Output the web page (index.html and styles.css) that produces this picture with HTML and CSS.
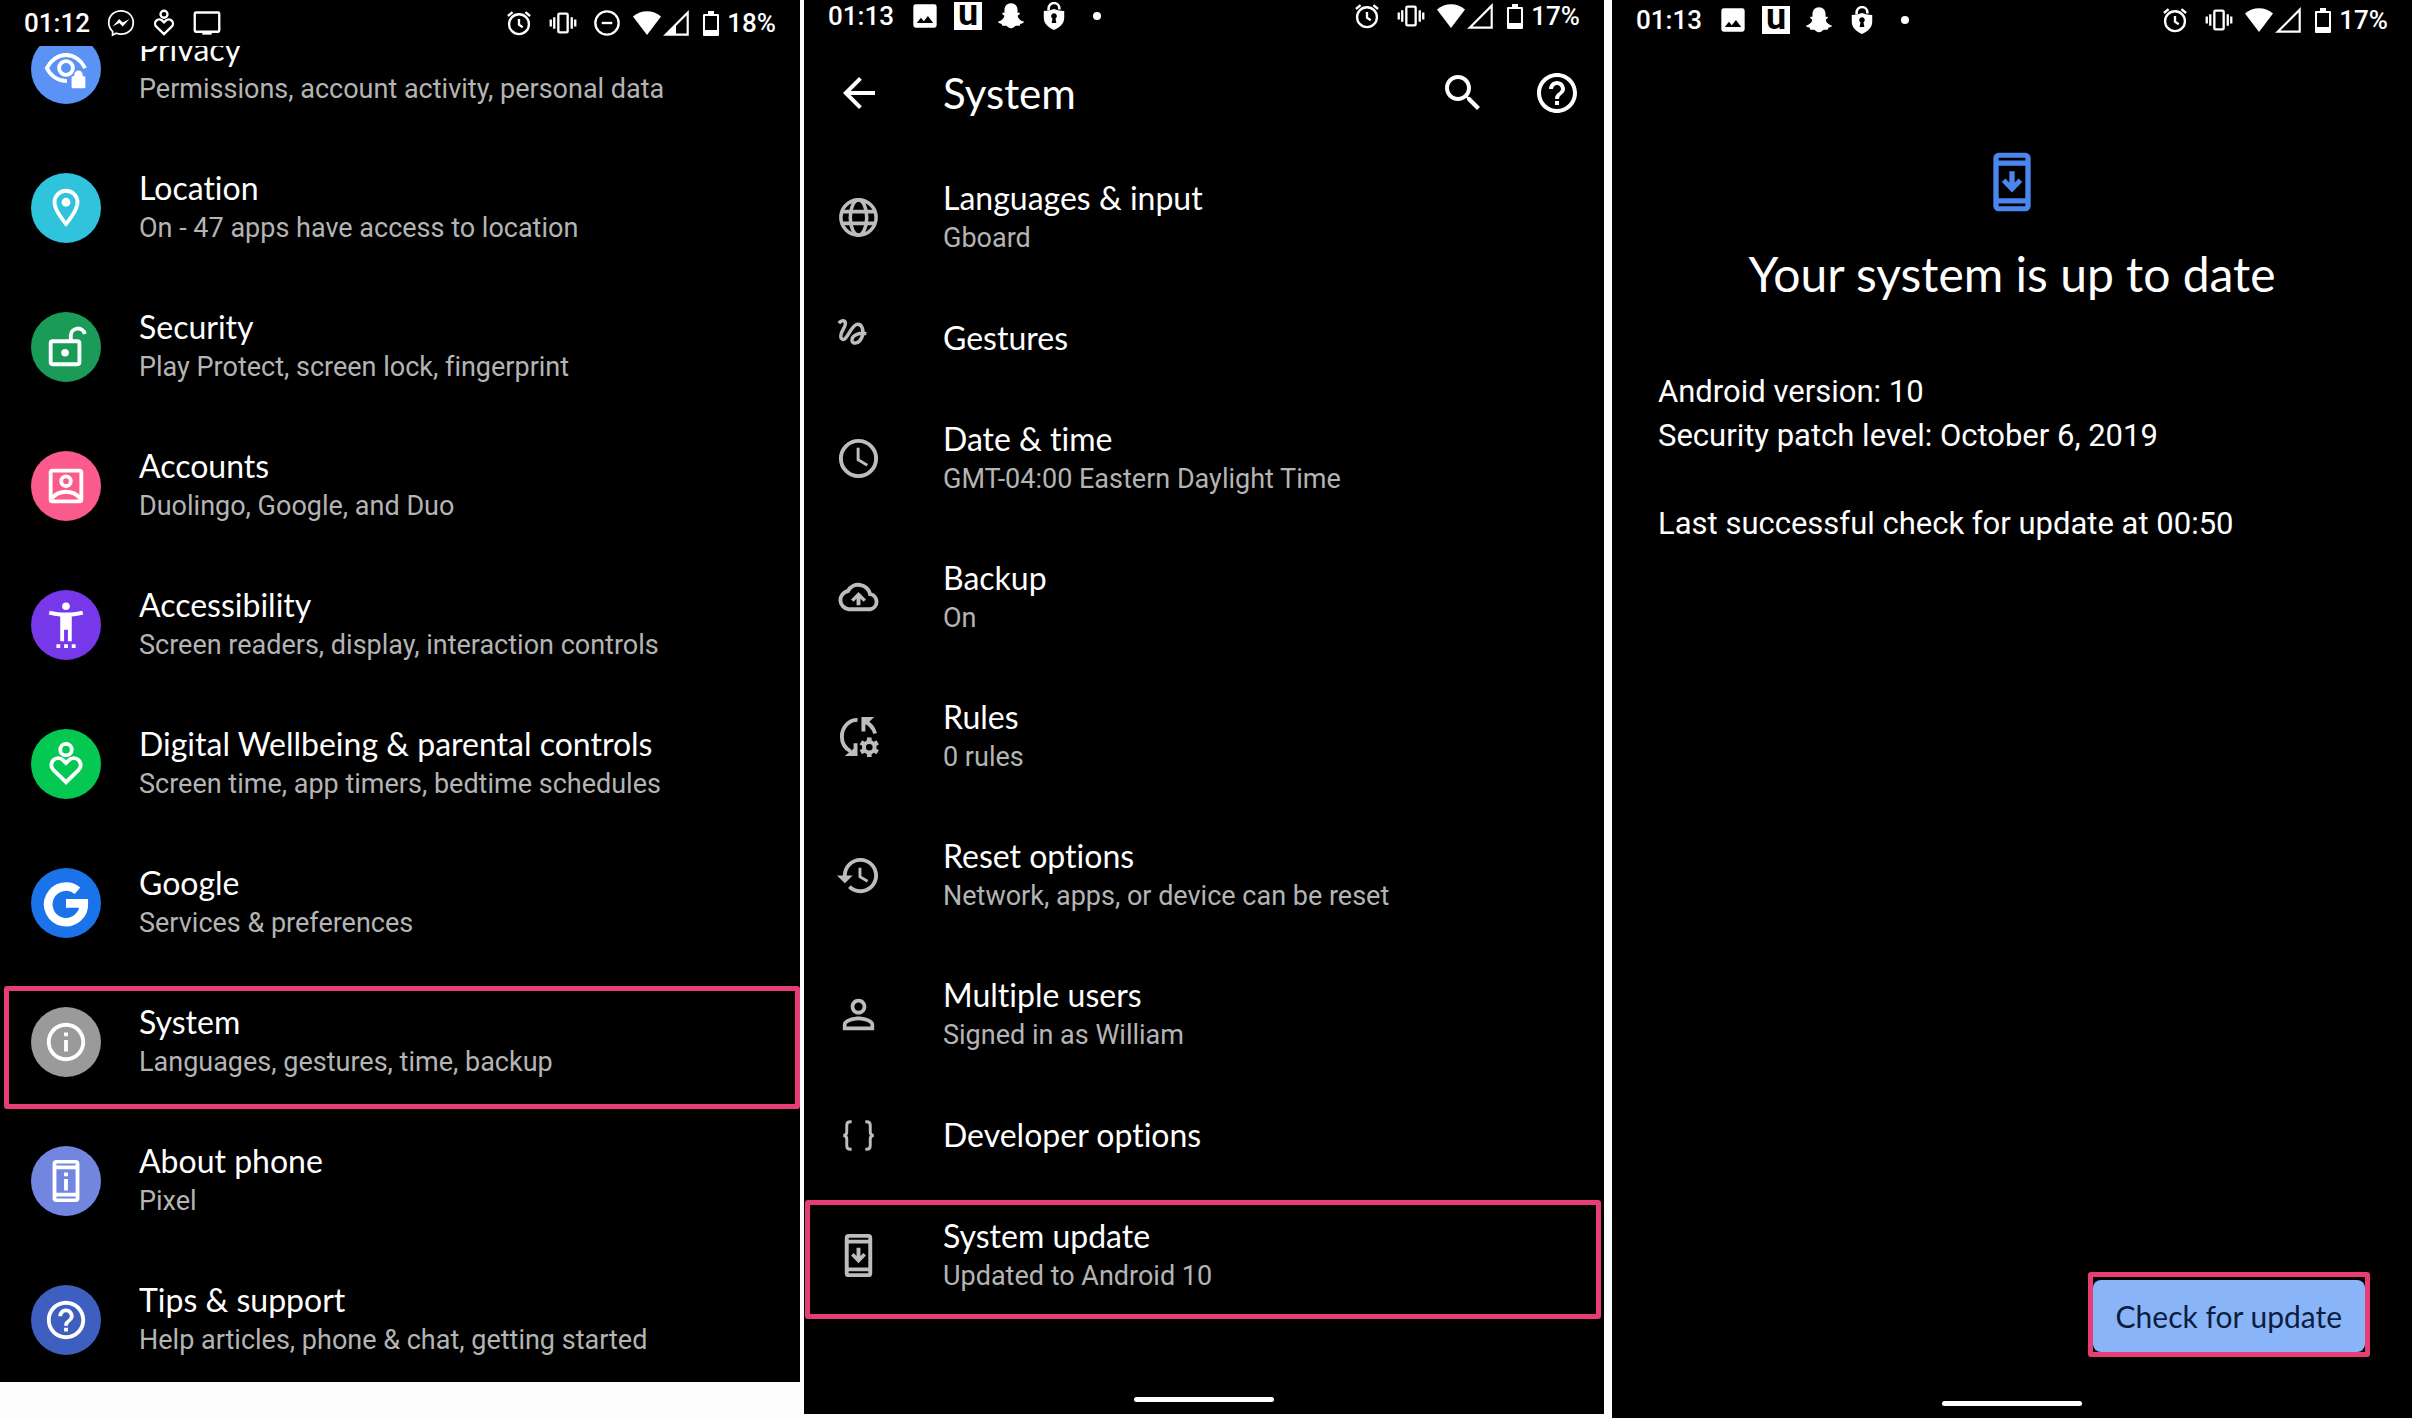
FILE: index.html
```html
<!DOCTYPE html>
<html lang="en">
<head>
    <meta charset="UTF-8">
    <meta name="viewport" content="width=device-width, initial-scale=1.0">
    <title>System update</title>
    <link rel="stylesheet" href="styles.css">
</head>
<body>
    <!-- shared icons -->
    <svg class="sprite" aria-hidden="true">
        <symbol id="alarm" viewBox="0 0 24 24">
            <circle cx="12" cy="13" r="8.5" fill="none" stroke="currentColor" stroke-width="2"/>
            <path d="M12 8.500v5l3.200 2.200M2.500 6l4-3.400M21.500 6l-4-3.400" fill="none" stroke="currentColor" stroke-width="2"/>
        </symbol>
        <symbol id="vibrate" viewBox="0 0 24 24">
            <rect x="8" y="4" width="8" height="16" rx="1" fill="none" stroke="currentColor" stroke-width="2"/>
            <path d="M4.500 7v10M1.500 9v6M19.500 7v10M22.500 9v6" stroke="currentColor" stroke-width="2"/>
        </symbol>
        <symbol id="dnd" viewBox="0 0 24 24">
            <circle cx="12" cy="12" r="10" fill="none" stroke="currentColor" stroke-width="2"/>
            <path d="M7.500 12h9" stroke="currentColor" stroke-width="2"/>
        </symbol>
        <symbol id="wifi" viewBox="0 0 28 24">
            <path d="M14 24L0 5.500C8-1.500 20-1.500 28 5.500z" fill="currentColor"/>
        </symbol>
        <symbol id="signal" viewBox="0 0 24 24">
            <path d="M2.500 22.800L22.800 2.500V22.800z" fill="none" stroke="currentColor" stroke-width="2"/>
        </symbol>
        <symbol id="signal-low" viewBox="0 0 24 24">
            <path d="M2.500 22.800L22.800 2.500V22.800z" fill="none" stroke="currentColor" stroke-width="2"/>
            <path d="M2.500 22.800L12 13.300V22.800z" fill="currentColor"/>
        </symbol>
        <symbol id="battery" viewBox="0 0 16 25">
            <path d="M5 0h6v3h4a1 1 0 0 1 1 1v20a1 1 0 0 1-1 1H1a1 1 0 0 1-1-1V4a1 1 0 0 1 1-1h4zM2 5v14h12V5z" fill="currentColor" fill-rule="evenodd"/>
        </symbol>
        <symbol id="picture" viewBox="0 0 24 24">
            <path d="M4 2h16a2 2 0 0 1 2 2v16a2 2 0 0 1-2 2H4a2 2 0 0 1-2-2V4a2 2 0 0 1 2-2zM5 18h14l-4.500-6-3.500 4.500-2.500-3z" fill="currentColor" fill-rule="evenodd"/>
        </symbol>
        <symbol id="ghost" viewBox="0 0 24 24">
            <path d="M12 1c3.600 0 5.600 2.600 5.600 5.800v2.400c.8.300 1.700-.2 2 .4.300.8-1.600 1.400-1.800 2.200-.2 1.400 2.200 4.400 5.200 5 .4 1.300-2.200 1.600-2.900 1.900-.4.500-.2 1.300-.8 1.600-.8.300-1.900-.3-3.200.1-1.300.5-2 2.100-4.100 2.100s-2.800-1.600-4.100-2.100c-1.300-.4-2.400.2-3.200-.1-.6-.3-.4-1.100-.8-1.600C3.200 18.400.600 18.100 1 16.800c3-.6 5.400-3.600 5.200-5C6 11 4.100 10.400 4.400 9.600c.3-.6 1.200-.1 2-.4V6.800C6.400 3.600 8.400 1 12 1z" fill="currentColor"/>
        </symbol>
        <symbol id="shield-lock" viewBox="0 0 24 26">
            <path d="M7 8V6a5 5 0 0 1 10 0v1" fill="none" stroke="currentColor" stroke-width="2.400"/>
            <path d="M12 6.500c3 1.200 6 1.800 9.500 1.800v6.200c0 5.500-4 9.500-9.500 11.500C6.500 24 2.500 20 2.500 14.500V8.300C6 8.300 9 7.700 12 6.500zM12 10.500a2.600 2.600 0 0 0-1.400 4.800L9.800 19.500h4.400l-.8-4.200A2.600 2.600 0 0 0 12 10.500z" fill="currentColor" fill-rule="evenodd"/>
        </symbol>
        <symbol id="wellbeing" viewBox="0 0 24 24">
            <circle cx="12" cy="4.500" r="3" fill="none" stroke="currentColor" stroke-width="2"/>
            <path d="M12 21.500l-6.600-6.400a3.600 3.600 0 0 1 5.100-5.100l1.500 1.500 1.500-1.500a3.600 3.600 0 0 1 5.100 5.100z" fill="none" stroke="currentColor" stroke-width="2"/>
        </symbol>
        <symbol id="update" viewBox="0 0 24 24">
            <path d="M7 1h10a2 2 0 0 1 2 2v18a2 2 0 0 1-2 2H7a2 2 0 0 1-2-2V3a2 2 0 0 1 2-2zM7 2.900v1h10v-1zM7 5.900v12.200h10V5.900zM7 20.100v1h10v-1z" fill="currentColor" fill-rule="evenodd"/>
            <path d="M11 8h2v4.200l1.500-1.500 1.300 1.300L12 15.900 8.200 12l1.300-1.300 1.500 1.500z" fill="currentColor"/>
        </symbol>
        <symbol id="help" viewBox="0 0 24 24">
            <path d="M11 18h2v-2h-2v2zm1-16C6.480 2 2 6.480 2 12s4.480 10 10 10 10-4.480 10-10S17.520 2 12 2zm0 18c-4.410 0-8-3.590-8-8s3.590-8 8-8 8 3.590 8 8-3.590 8-8 8zm0-14c-2.210 0-4 1.790-4 4h2c0-1.100.9-2 2-2s2 .9 2 2c0 2-3 1.750-3 5h2c0-2.250 3-2.500 3-5 0-2.210-1.790-4-4-4z" fill="currentColor"/>
        </symbol>
    </svg>

    <main class="screens">
        <!-- Settings -->
        <section class="phone phone-settings">
            <header class="status">
                <time>01:12</time>
                <div class="notices">
                    <svg viewBox="0 0 24 24">
                        <path d="M12 1.500c-6 0-10.500 4.400-10.500 10.200 0 3 1.300 5.600 3.300 7.400v3.200l3-1.500c1.300.4 2.700.7 4.200.7 6 0 10.500-4.200 10.500-9.800S18 1.500 12 1.500z" fill="none" stroke="currentColor" stroke-width="1.500"/>
                        <path d="M4.800 15l5.700-6.500 3 3 5.700-3-5.700 6.500-3-3z" fill="currentColor"/>
                    </svg>
                    <svg><use href="#wellbeing"/></svg>
                    <svg viewBox="0 0 24 24">
                        <path d="M2.500 3h19a1 1 0 0 1 1 1v14.500a1 1 0 0 1-1 1h-19a1 1 0 0 1-1-1V4a1 1 0 0 1 1-1z" fill="none" stroke="currentColor" stroke-width="2"/>
                        <path d="M8 19h8v3H8z" fill="currentColor"/>
                    </svg>
                </div>
                <div class="signals">
                    <svg><use href="#alarm"/></svg>
                    <svg><use href="#vibrate"/></svg>
                    <svg><use href="#dnd"/></svg>
                </div>
                <div class="network">
                    <svg class="wifi"><use href="#wifi"/></svg>
                    <svg class="bars"><use href="#signal-low"/></svg>
                </div>
                <svg class="battery"><use href="#battery"/></svg>
                <span>18%</span>
            </header>
            <nav class="scroll">
                <ul class="list">
                    <li><a class="row" href="#">
                        <span class="badge privacy"><svg viewBox="0 0 24 24">
                            <path d="M12.500 18.300C7.800 18.300 4 15.500 2 11.500 4 7.500 7.800 4.700 12 4.700s8 2.800 10 6.800" fill="none" stroke="currentColor" stroke-width="2"/>
                            <circle cx="12" cy="11.500" r="3.600" fill="none" stroke="currentColor" stroke-width="2"/>
                            <path d="M15.500 15.800h.8V15a2.200 2.200 0 0 1 4.400 0v.8h.8a.6.600 0 0 1 .6.600v5a.6.600 0 0 1-.6.600h-6a.6.600 0 0 1-.6-.6v-5a.6.600 0 0 1 .6-.6z" fill="currentColor"/>
                        </svg></span>
                        <span class="text"><b>Privacy</b><small>Permissions, account activity, personal data</small></span>
                    </a></li>
                    <li><a class="row" href="#">
                        <span class="badge location"><svg viewBox="0 0 24 24">
                            <path d="M12 3a6 6 0 0 0-6 6c0 4.500 6 11.300 6 11.300S18 13.500 18 9a6 6 0 0 0-6-6z" fill="none" stroke="currentColor" stroke-width="2"/>
                            <circle cx="12" cy="9" r="2.300" fill="currentColor"/>
                        </svg></span>
                        <span class="text"><b>Location</b><small>On - 47 apps have access to location</small></span>
                    </a></li>
                    <li><a class="row" href="#">
                        <span class="badge security"><svg viewBox="0 0 24 24">
                            <rect x="4" y="9" width="15" height="12" rx="1" fill="none" stroke="currentColor" stroke-width="2"/>
                            <circle cx="11.500" cy="15" r="2" fill="currentColor"/>
                            <path d="M14.500 9V6a3.700 3.700 0 0 1 7.300-.8" fill="none" stroke="currentColor" stroke-width="2"/>
                        </svg></span>
                        <span class="text"><b>Security</b><small>Play Protect, screen lock, fingerprint</small></span>
                    </a></li>
                    <li><a class="row" href="#">
                        <span class="badge accounts"><svg viewBox="0 0 24 24">
                            <rect x="4" y="4" width="16" height="16" rx="1" fill="none" stroke="currentColor" stroke-width="2"/>
                            <circle cx="12" cy="9.500" r="2.500" fill="none" stroke="currentColor" stroke-width="2"/>
                            <path d="M4.500 18.500c2-2.400 4.500-3.500 7.500-3.500s5.500 1.100 7.500 3.500" fill="none" stroke="currentColor" stroke-width="2"/>
                        </svg></span>
                        <span class="text"><b>Accounts</b><small>Duolingo, Google, and Duo</small></span>
                    </a></li>
                    <li><a class="row" href="#">
                        <span class="badge accessibility"><svg viewBox="0 0 24 24">
                            <path d="M20.500 4.500c-2.600.7-5.700 1-8.500 1s-5.900-.3-8.500-1L3 6.500c1.900.5 4 .8 6 1v13h2v-6h2v6h2v-13c2-.2 4.100-.5 6-1z" fill="currentColor"/>
                            <circle cx="12" cy="2.200" r="2" fill="currentColor"/>
                            <path d="M7 22h2v2H7zM11 22h2v2h-2zM15 22h2v2h-2z" fill="currentColor"/>
                        </svg></span>
                        <span class="text"><b>Accessibility</b><small>Screen readers, display, interaction controls</small></span>
                    </a></li>
                    <li><a class="row" href="#">
                        <span class="badge wellbeing"><svg><use href="#wellbeing"/></svg></span>
                        <span class="text"><b>Digital Wellbeing &amp; parental controls</b><small>Screen time, app timers, bedtime schedules</small></span>
                    </a></li>
                    <li><a class="row" href="#">
                        <span class="badge google"><svg viewBox="0 0 24 24">
                            <path d="M18 5.600A9.300 9.300 0 1 0 21.300 12.200H12" fill="none" stroke="currentColor" stroke-width="4.500"/>
                        </svg></span>
                        <span class="text"><b>Google</b><small>Services &amp; preferences</small></span>
                    </a></li>
                    <li class="marked"><a class="row" href="#">
                        <span class="badge system"><svg viewBox="0 0 24 24">
                            <path d="M11 7h2v2h-2zm0 4h2v6h-2zm1-9C6.480 2 2 6.480 2 12s4.480 10 10 10 10-4.480 10-10S17.520 2 12 2zm0 18c-4.410 0-8-3.590-8-8s3.590-8 8-8 8 3.590 8 8-3.590 8-8 8z" fill="currentColor"/>
                        </svg></span>
                        <span class="text"><b>System</b><small>Languages, gestures, time, backup</small></span>
                    </a></li>
                    <li><a class="row" href="#">
                        <span class="badge about"><svg viewBox="0 0 24 24">
                            <path d="M7 1h10a2 2 0 0 1 2 2v18a2 2 0 0 1-2 2H7a2 2 0 0 1-2-2V3a2 2 0 0 1 2-2zM7 2.900v1h10v-1zM7 5.900v12.200h10V5.900zM7 20.100v1h10v-1z" fill="currentColor" fill-rule="evenodd"/>
                            <path d="M11 7.500h2v2h-2zM11 11h2v6h-2z" fill="currentColor"/>
                        </svg></span>
                        <span class="text"><b>About phone</b><small>Pixel</small></span>
                    </a></li>
                    <li><a class="row" href="#">
                        <span class="badge tips"><svg><use href="#help"/></svg></span>
                        <span class="text"><b>Tips &amp; support</b><small>Help articles, phone &amp; chat, getting started</small></span>
                    </a></li>
                </ul>
            </nav>
        </section>

        <!-- System -->
        <section class="phone phone-system">
            <header class="status">
                <time>01:13</time>
                <div class="notices">
                    <svg><use href="#picture"/></svg>
                    <span class="u-logo">u</span>
                    <svg><use href="#ghost"/></svg>
                    <svg><use href="#shield-lock"/></svg>
                    <span class="dot"></span>
                </div>
                <div class="signals">
                    <svg><use href="#alarm"/></svg>
                    <svg><use href="#vibrate"/></svg>
                </div>
                <div class="network">
                    <svg class="wifi"><use href="#wifi"/></svg>
                    <svg class="bars"><use href="#signal"/></svg>
                </div>
                <svg class="battery"><use href="#battery"/></svg>
                <span>17%</span>
            </header>
            <div class="appbar">
                <button type="button" aria-label="Back"><svg viewBox="0 0 24 24">
                    <path d="M20 11H7.830l5.590-5.590L12 4l-8 8 8 8 1.410-1.410L7.830 13H20v-2z" fill="currentColor"/>
                </svg></button>
                <h1>System</h1>
                <button type="button" aria-label="Search"><svg viewBox="0 0 24 24">
                    <path d="M15.500 14h-.79l-.28-.27C15.410 12.590 16 11.110 16 9.500 16 5.910 13.090 3 9.500 3S3 5.910 3 9.500 5.910 16 9.500 16c1.610 0 3.090-.59 4.230-1.570l.27.280v.79l5 4.990L20.490 19l-4.990-5zm-6 0C7.010 14 5 11.990 5 9.500S7.010 5 9.500 5 14 7.010 14 9.500 11.990 14 9.500 14z" fill="currentColor"/>
                </svg></button>
                <button type="button" aria-label="Help"><svg><use href="#help"/></svg></button>
            </div>
            <nav>
                <ul class="list">
                    <li><a class="row" href="#">
                        <svg class="icon" viewBox="0 0 24 24">
                            <g fill="none" stroke="currentColor" stroke-width="1.800">
                                <circle cx="12" cy="12" r="9"/>
                                <ellipse cx="12" cy="12" rx="4.200" ry="9"/>
                                <path d="M3.500 9h17M3.500 15h17"/>
                            </g>
                        </svg>
                        <span class="text"><b>Languages &amp; input</b><small>Gboard</small></span>
                    </a></li>
                    <li><a class="row single" href="#">
                        <svg class="icon" viewBox="0 0 24 24">
                            <path d="M2 4.200C3 2.600 5 2.400 5.300 4 5.700 6.200 1.600 9.800 3.300 12c2.300 2.800 4.600-6.400 7.800-7.200 2.800-.6 4 3.600 2.500 6.800-1.300 3-4.600 3.600-4.900 1.400C8.400 10.300 12.500 8.800 16 9.500" fill="none" stroke="currentColor" stroke-width="1.800"/>
                        </svg>
                        <span class="text"><b>Gestures</b></span>
                    </a></li>
                    <li><a class="row" href="#">
                        <svg class="icon" viewBox="0 0 24 24">
                            <circle cx="12" cy="12" r="9" fill="none" stroke="currentColor" stroke-width="2"/>
                            <path d="M11.800 6.500V12.600L16.500 15.400" fill="none" stroke="currentColor" stroke-width="1.500"/>
                        </svg>
                        <span class="text"><b>Date &amp; time</b><small>GMT-04:00 Eastern Daylight Time</small></span>
                    </a></li>
                    <li><a class="row" href="#">
                        <svg class="icon" viewBox="0 0 24 24">
                            <path d="M17.900 10.300A6.100 6.100 0 0 0 6.600 8.700 4.700 4.700 0 0 0 7 18h11a3.900 3.900 0 0 0-.1-7.700z" fill="none" stroke="currentColor" stroke-width="2"/>
                            <path d="M12 9.200l-3.800 3.800 1.200 1.200 1.600-1.500v3.300h2v-3.300l1.600 1.500 1.200-1.200z" fill="currentColor"/>
                        </svg>
                        <span class="text"><b>Backup</b><small>On</small></span>
                    </a></li>
                    <li><a class="row" href="#">
                        <svg class="icon" viewBox="0 0 24 24">
                            <g fill="none" stroke="currentColor" stroke-width="2">
                                <path d="M11.500 3.500C7 3.500 3.500 7.300 3.500 12c0 3.300 1.800 6.200 4.500 7.600"/>
                                <path d="M20.500 10.500C19.700 7.800 17.900 5.500 15 4.300"/>
                                <circle cx="17.500" cy="17.500" r="2.700"/>
                            </g>
                            <path d="M13.500 2h6.500l-2.200 2.200L15.500 6v3.500h-2zM5 22h6.500v-6.500h-2v2.800L7.200 20z" fill="currentColor"/>
                            <path d="M17.500 12.500v2M17.500 20.500v2M13.200 15l1.700 1M20.100 19l1.700 1M21.800 15l-1.700 1M14.900 19l-1.700 1" stroke="currentColor" stroke-width="2.400"/>
                        </svg>
                        <span class="text"><b>Rules</b><small>0 rules</small></span>
                    </a></li>
                    <li><a class="row" href="#">
                        <svg class="icon" viewBox="0 0 24 24">
                            <path d="M13 3c-4.970 0-9 4.030-9 9H1l3.890 3.890.07.140L9 12H6c0-3.870 3.130-7 7-7s7 3.130 7 7-3.130 7-7 7c-1.930 0-3.680-.79-4.940-2.060l-1.420 1.420C8.270 19.990 10.510 21 13 21c4.970 0 9-4.030 9-9s-4.030-9-9-9zm-1 5v5l4.280 2.540.72-1.210-3.500-2.080V8H12z" fill="currentColor"/>
                        </svg>
                        <span class="text"><b>Reset options</b><small>Network, apps, or device can be reset</small></span>
                    </a></li>
                    <li><a class="row" href="#">
                        <svg class="icon" viewBox="0 0 24 24">
                            <path d="M12 5.900c1.160 0 2.100.94 2.100 2.100s-.94 2.100-2.100 2.100S9.900 9.160 9.900 8s.94-2.100 2.100-2.100m0 9c2.970 0 6.100 1.460 6.100 2.100v1.100H5.900V17c0-.64 3.130-2.100 6.100-2.100M12 4C9.790 4 8 5.790 8 8s1.790 4 4 4 4-1.790 4-4-1.790-4-4-4zm0 9c-2.670 0-8 1.340-8 4v3h16v-3c0-2.660-5.330-4-8-4z" fill="currentColor"/>
                        </svg>
                        <span class="text"><b>Multiple users</b><small>Signed in as William</small></span>
                    </a></li>
                    <li><a class="row single" href="#">
                        <svg class="icon" viewBox="0 0 24 24">
                            <path d="M8.500 5H7.800C6.600 5 6 5.600 6 6.800v3.400c0 1-.6 1.800-1.800 1.800 1.200 0 1.800.8 1.800 1.800v3.400C6 18.400 6.600 19 7.800 19h.7M15.500 5h.7c1.200 0 1.800.6 1.800 1.800v3.400c0 1 .6 1.800 1.800 1.800-1.200 0-1.800.8-1.800 1.800v3.400c0 1.200-.6 1.800-1.800 1.800h-.7" fill="none" stroke="currentColor" stroke-width="1.500"/>
                        </svg>
                        <span class="text"><b>Developer options</b></span>
                    </a></li>
                    <li class="marked"><a class="row" href="#">
                        <svg class="icon"><use href="#update"/></svg>
                        <span class="text"><b>System update</b><small>Updated to Android 10</small></span>
                    </a></li>
                </ul>
            </nav>
            <div class="home-bar"></div>
        </section>

        <!-- System update -->
        <section class="phone phone-update">
            <header class="status">
                <time>01:13</time>
                <div class="notices">
                    <svg><use href="#picture"/></svg>
                    <span class="u-logo">u</span>
                    <svg><use href="#ghost"/></svg>
                    <svg><use href="#shield-lock"/></svg>
                    <span class="dot"></span>
                </div>
                <div class="signals">
                    <svg><use href="#alarm"/></svg>
                    <svg><use href="#vibrate"/></svg>
                </div>
                <div class="network">
                    <svg class="wifi"><use href="#wifi"/></svg>
                    <svg class="bars"><use href="#signal"/></svg>
                </div>
                <svg class="battery"><use href="#battery"/></svg>
                <span>17%</span>
            </header>
            <div class="result">
                <svg class="hero"><use href="#update"/></svg>
                <h1>Your system is up to date</h1>
                <p>Android version: 10<br>Security patch level: October 6, 2019</p>
                <p>Last successful check for update at 00:50</p>
            </div>
            <div class="actions">
                <div class="frame">
                    <button type="button">Check for update</button>
                </div>
            </div>
            <div class="home-bar"></div>
        </section>
    </main>
</body>
</html>
```
FILE: styles.css
```css
* {
    box-sizing: border-box;
}
body {
    margin: 0;
    background: #fdfdfd;
    color: #fff;
    font-family: Roboto, sans-serif;
    font-variant-ligatures: none;
}
.sprite {
    position: absolute;
    width: 0;
    height: 0;
}
svg {
    flex: none;
    display: block;
}
.screens {
    display: flex;
    align-items: flex-start;
    min-height: 100vh;
}

/* phones */
.phone {
    flex: 1;
    display: flex;
    flex-direction: column;
    overflow: hidden;
    background: #000;
}
.phone-settings {
    margin-right: 4px;
}
.phone-system {
    min-height: calc(100vh - 6px);
    margin-right: 8px;
}
.phone-update {
    min-height: calc(100vh - 2px);
}

/* status bar */
.status {
    display: flex;
    align-items: center;
    height: 32px;
    padding: 0 24px;
    font-size: 26px;
    font-weight: 500;
}
.phone-settings .status {
    height: 46px;
}
.phone-update .status {
    height: 40px;
}
.status time {
    width: 83px;
}
.notices {
    display: flex;
    align-items: center;
    gap: 15px;
    margin-right: auto;
}
.notices svg,
.signals svg {
    width: 28px;
    height: 28px;
}
.u-logo {
    display: flex;
    align-items: center;
    justify-content: center;
    width: 28px;
    height: 28px;
    padding-bottom: 6px;
    background: #fff;
    color: #000;
    font-size: 36px;
    font-weight: 700;
    line-height: 22px;
}
.dot {
    width: 8px;
    height: 8px;
    margin: 0 10px;
    border-radius: 50%;
    background: #fff;
}
.signals {
    display: flex;
    gap: 16px;
}
.network {
    display: flex;
    align-items: center;
    gap: 2px;
    margin: 0 14px 0 12px;
}
.wifi {
    width: 28px;
    height: 24px;
}
.bars {
    width: 26px;
    height: 26px;
}
.battery {
    width: 16px;
    height: 25px;
    margin-right: 8px;
}

/* settings rows */
.scroll {
    overflow: hidden;
}
.list {
    margin: 0;
    padding: 0;
    list-style: none;
}
.scroll .list {
    margin: -47px 0 -7px;
}
.row {
    display: flex;
    align-items: center;
    gap: 61px;
    height: 139px;
    padding: 0 31px;
    color: #fff;
    text-decoration: none;
}
.scroll .row {
    gap: 38px;
}
.row.single {
    height: 102px;
}
.text {
    display: flex;
    flex-direction: column;
}
.text b {
    font-family: Lato, sans-serif;
    font-size: 32px;
    font-weight: 400;
    line-height: 40px;
}
.text small {
    color: #b4b4b4;
    font-size: 27px;
    line-height: 40px;
}
.icon {
    width: 47px;
    height: 47px;
    color: #bdbdbd;
}
.badge {
    flex: none;
    display: flex;
    align-items: center;
    justify-content: center;
    width: 70px;
    height: 70px;
    border-radius: 50%;
}
.badge svg {
    width: 46px;
    height: 46px;
    overflow: visible;
}
.privacy { background: #5b92f5; }
.location { background: #2fc4dc; }
.security { background: #1a9c58; }
.accounts { background: #fb5a8d; }
.accessibility { background: #7738ea; }
.wellbeing { background: #05c853; }
.google { background: #1a73e8; }
.system { background: #9a9a9a; }
.about { background: #7386df; }
.tips { background: #3f5fc0; }

/* pink frame drawn over the row */
.marked {
    position: relative;
}
.marked::after {
    content: "";
    position: absolute;
    inset: 14px 3px 6px 1px;
    border: 5px solid #e63e74;
    border-radius: 3px;
    pointer-events: none;
}
.scroll .marked::after {
    inset: 14px 0 2px 4px;
}

/* app bar */
.appbar {
    display: flex;
    align-items: center;
    gap: 46px;
    height: 116px;
    padding: 6px 23px 0 31px;
}
.appbar button {
    padding: 0;
    border: 0;
    background: none;
    color: #fff;
}
.appbar svg {
    width: 48px;
    height: 48px;
}
.appbar h1 {
    flex: 1;
    margin: 0 0 0 14px;
    font-family: Lato, sans-serif;
    font-size: 42px;
    font-weight: 400;
}

/* update page */
.result {
    padding: 110px 46px 0;
}
.hero {
    width: 64px;
    height: 64px;
    margin: 0 auto;
    color: #4a86ee;
}
.result h1 {
    margin: 32px 0 68px;
    font-family: Lato, sans-serif;
    font-size: 48px;
    font-weight: 400;
    line-height: 56px;
    text-align: center;
}
.result p {
    margin: 0 0 44px;
    font-size: 31px;
    line-height: 44px;
}
.actions {
    display: flex;
    justify-content: flex-end;
    margin-top: auto;
    padding: 0 42px 44px;
}
.frame {
    padding-top: 3px;
    border: 5px solid #e63e74;
    border-radius: 3px;
}
.actions button {
    display: block;
    height: 72px;
    padding: 0 23px;
    border: 0;
    border-radius: 8px;
    background: #8ab4f8;
    color: #0b1d40;
    font-family: Lato, sans-serif;
    font-size: 30px;
}

/* gesture bar */
.home-bar {
    width: 140px;
    height: 5px;
    margin: auto auto 12px;
    border-radius: 3px;
    background: #fff;
}
.actions + .home-bar {
    margin-top: 0;
}
```
